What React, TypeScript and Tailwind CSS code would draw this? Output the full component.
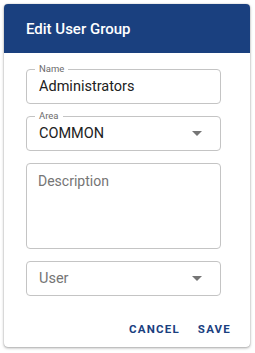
import React from "react";

function Arrow() {
  return (
    <svg width="10" height="5" viewBox="0 0 10 5" className="shrink-0">
      <path d="M0 0 L10 0 L5 5 Z" fill="#757575" />
    </svg>
  );
}

export default function App() {
  return (
    <div className="w-[255px] h-[353px] bg-white pt-[4px] pl-[4px] font-['Roboto','Liberation_Sans',sans-serif]">
      <div className="w-[246px] h-[343px] rounded-[4px] bg-white shadow-[0_1px_3px_rgba(0,0,0,0.35),0_0_1px_rgba(0,0,0,0.3)] overflow-hidden flex flex-col">
        <div className="h-[49px] bg-[#1a407f] flex items-center pl-[22px] pt-[1px]">
          <span className="text-white text-[15px] font-medium">Edit User Group</span>
        </div>
        <div className="pl-[22px] pt-[16px] flex flex-col gap-[12px]">
          <div className="relative w-[195px] h-[35px] border border-[#c4c4c4] rounded-[4px] flex items-center pl-[12px]">
            <span className="absolute -top-[7px] left-[8px] bg-white px-[4px] text-[9.5px] leading-[12px] text-[#6b6b6b]">Name</span>
            <span className="text-[14.5px] text-[#212121] pt-[1px]">Administrators</span>
          </div>
          <div className="relative w-[195px] h-[35px] border border-[#c4c4c4] rounded-[4px] flex items-center pl-[12px] pr-[18px] justify-between">
            <span className="absolute -top-[7px] left-[8px] bg-white px-[4px] text-[9.5px] leading-[12px] text-[#6b6b6b]">Area</span>
            <span className="text-[14.5px] text-[#212121] pt-[1px]">COMMON</span>
            <Arrow />
          </div>
          <div className="w-[195px] h-[86px] border border-[#c4c4c4] rounded-[4px] pl-[11px] pt-[5px]">
            <span className="text-[14px] text-[#757575]">Description</span>
          </div>
          <div className="w-[195px] h-[35px] border border-[#c4c4c4] rounded-[4px] flex items-center pl-[12px] pr-[18px] justify-between">
            <span className="text-[14.5px] text-[#757575]">User</span>
            <Arrow />
          </div>
        </div>
        <div className="flex justify-end gap-[18px] pr-[19px] pt-[25px]">
          <span className="text-[11.5px] font-bold tracking-[1.2px] text-[#1a407f]">CANCEL</span>
          <span className="text-[11.5px] font-bold tracking-[1.2px] text-[#1a407f]">SAVE</span>
        </div>
      </div>
    </div>
  );
}
